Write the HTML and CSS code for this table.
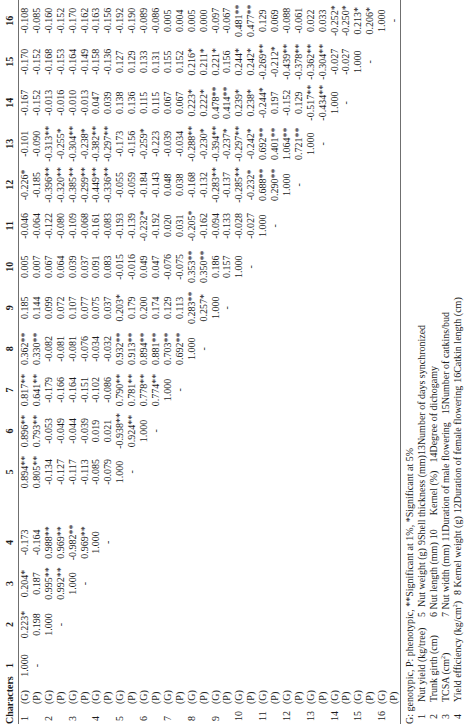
FILE: index.html
```html
<!DOCTYPE html>
<html>
<head>
<meta charset="utf-8">
<title>Correlation table</title>
<link rel="stylesheet" href="styles.css">
</head>
<body>
<div class="frame">
<div class="sheet">
<table class="corr">
<colgroup>
<col class="c-num"><col class="c-gp">
<col class="c-val"><col class="c-val"><col class="c-val"><col class="c-val">
<col class="c-gap">
<col class="c-val"><col class="c-val"><col class="c-val"><col class="c-val"><col class="c-val"><col class="c-val">
<col class="c-val"><col class="c-val"><col class="c-val"><col class="c-val"><col class="c-val"><col class="c-val">
</colgroup>
<thead>
<tr><th colspan="2" class="chars">Characters</th><th>1</th><th>2</th><th>3</th><th>4</th><th></th><th>5</th><th>6</th><th>7</th><th>8</th><th>9</th><th>10</th><th>11</th><th>12</th><th>13</th><th>14</th><th>15</th><th>16</th></tr>
</thead>
<tbody>
<tr><td class="n">1</td><td class="gp">(G)</td><td>1.000</td><td>0.223*</td><td>0.204*</td><td>-0.173</td><td></td><td>0.894**</td><td>0.896**</td><td>0.817**</td><td>0.362**</td><td>0.185</td><td>0.005</td><td>-0.046</td><td>-0.226*</td><td>-0.101</td><td>-0.167</td><td>-0.170</td><td>-0.108</td></tr>
<tr><td class="n"></td><td class="gp">(P)</td><td>-</td><td>0.198</td><td>0.187</td><td>-0.164</td><td></td><td>0.805**</td><td>0.793**</td><td>0.641**</td><td>0.330**</td><td>0.144</td><td>0.007</td><td>-0.064</td><td>-0.185</td><td>-0.090</td><td>-0.152</td><td>-0.152</td><td>-0.085</td></tr>
<tr><td class="n">2</td><td class="gp">(G)</td><td></td><td>1.000</td><td>0.995**</td><td>0.988**</td><td></td><td>-0.134</td><td>-0.053</td><td>-0.179</td><td>-0.082</td><td>0.099</td><td>0.067</td><td>-0.122</td><td>-0.396**</td><td>-0.313**</td><td>-0.013</td><td>-0.168</td><td>-0.160</td></tr>
<tr><td class="n"></td><td class="gp">(P)</td><td></td><td>-</td><td>0.992**</td><td>0.969**</td><td></td><td>-0.127</td><td>-0.049</td><td>-0.166</td><td>-0.081</td><td>0.072</td><td>0.064</td><td>-0.080</td><td>-0.320**</td><td>-0.255*</td><td>-0.016</td><td>-0.153</td><td>-0.152</td></tr>
<tr><td class="n">3</td><td class="gp">(G)</td><td></td><td></td><td>1.000</td><td>-0.982**</td><td></td><td>-0.117</td><td>-0.044</td><td>-0.164</td><td>-0.081</td><td>0.107</td><td>0.039</td><td>-0.109</td><td>-0.385**</td><td>-0.304**</td><td>-0.010</td><td>-0.164</td><td>-0.170</td></tr>
<tr><td class="n"></td><td class="gp">(P)</td><td></td><td></td><td>-</td><td>0.969**</td><td></td><td>-0.113</td><td>-0.039</td><td>-0.151</td><td>-0.076</td><td>0.077</td><td>0.037</td><td>-0.068</td><td>-0.299**</td><td>-0.238*</td><td>-0.013</td><td>-0.149</td><td>-0.162</td></tr>
<tr><td class="n">4</td><td class="gp">(G)</td><td></td><td></td><td></td><td>1.000</td><td></td><td>-0.085</td><td>0.019</td><td>-0.102</td><td>-0.034</td><td>0.075</td><td>0.091</td><td>-0.161</td><td>-0.449**</td><td>-0.382**</td><td>0.047</td><td>-0.158</td><td>-0.163</td></tr>
<tr><td class="n"></td><td class="gp">(P)</td><td></td><td></td><td></td><td>-</td><td></td><td>-0.079</td><td>0.021</td><td>-0.086</td><td>-0.032</td><td>0.037</td><td>0.083</td><td>-0.083</td><td>-0.336**</td><td>-0.297**</td><td>0.039</td><td>-0.136</td><td>-0.156</td></tr>
<tr><td class="n">5</td><td class="gp">(G)</td><td></td><td></td><td></td><td></td><td></td><td>1.000</td><td>-0.938**</td><td>0.790**</td><td>0.932**</td><td>0.203*</td><td>-0.015</td><td>-0.193</td><td>-0.055</td><td>-0.173</td><td>0.138</td><td>0.127</td><td>-0.192</td></tr>
<tr><td class="n"></td><td class="gp">(P)</td><td></td><td></td><td></td><td></td><td></td><td>-</td><td>0.924**</td><td>0.781**</td><td>0.913**</td><td>0.179</td><td>-0.016</td><td>-0.139</td><td>-0.059</td><td>-0.156</td><td>0.136</td><td>0.129</td><td>-0.190</td></tr>
<tr><td class="n">6</td><td class="gp">(G)</td><td></td><td></td><td></td><td></td><td></td><td></td><td>1.000</td><td>0.778**</td><td>0.894**</td><td>0.200</td><td>0.049</td><td>-0.232*</td><td>-0.184</td><td>-0.259*</td><td>0.115</td><td>0.133</td><td>-0.089</td></tr>
<tr><td class="n"></td><td class="gp">(P)</td><td></td><td></td><td></td><td></td><td></td><td></td><td>-</td><td>0.774**</td><td>0.881**</td><td>0.174</td><td>0.047</td><td>-0.192</td><td>-0.143</td><td>-0.223</td><td>0.115</td><td>0.131</td><td>-0.086</td></tr>
<tr><td class="n">7</td><td class="gp">(G)</td><td></td><td></td><td></td><td></td><td></td><td></td><td></td><td>1.000</td><td>0.703**</td><td>0.129</td><td>-0.076</td><td>0.020</td><td>0.048</td><td>-0.039</td><td>0.067</td><td>0.155</td><td>0.005</td></tr>
<tr><td class="n"></td><td class="gp">(P)</td><td></td><td></td><td></td><td></td><td></td><td></td><td></td><td>-</td><td>0.692**</td><td>0.113</td><td>-0.075</td><td>0.031</td><td>0.038</td><td>-0.034</td><td>0.067</td><td>0.152</td><td>0.004</td></tr>
<tr><td class="n">8</td><td class="gp">(G)</td><td></td><td></td><td></td><td></td><td></td><td></td><td></td><td></td><td>1.000</td><td>0.283**</td><td>0.353**</td><td>-0.205*</td><td>-0.168</td><td>-0.288**</td><td>0.223*</td><td>0.216*</td><td>0.005</td></tr>
<tr><td class="n"></td><td class="gp">(P)</td><td></td><td></td><td></td><td></td><td></td><td></td><td></td><td></td><td>-</td><td>0.257*</td><td>0.350**</td><td>-0.162</td><td>-0.132</td><td>-0.230*</td><td>0.222*</td><td>0.211*</td><td>0.000</td></tr>
<tr><td class="n">9</td><td class="gp">(G)</td><td></td><td></td><td></td><td></td><td></td><td></td><td></td><td></td><td></td><td>1.000</td><td>0.186</td><td>-0.094</td><td>-0.283**</td><td>-0.394**</td><td>0.478**</td><td>0.221*</td><td>-0.097</td></tr>
<tr><td class="n"></td><td class="gp">(P)</td><td></td><td></td><td></td><td></td><td></td><td></td><td></td><td></td><td></td><td>-</td><td>0.157</td><td>-0.133</td><td>-0.137</td><td>-0.237*</td><td>0.414**</td><td>0.156</td><td>-0.067</td></tr>
<tr><td class="n">10</td><td class="gp">(G)</td><td></td><td></td><td></td><td></td><td></td><td></td><td></td><td></td><td></td><td></td><td>1.000</td><td>-0.028</td><td>-0.285**</td><td>-0.297**</td><td>0.239*</td><td>0.244*</td><td>0.481**</td></tr>
<tr><td class="n"></td><td class="gp">(P)</td><td></td><td></td><td></td><td></td><td></td><td></td><td></td><td></td><td></td><td></td><td>-</td><td>-0.027</td><td>-0.232*</td><td>-0.242*</td><td>0.238*</td><td>0.242*</td><td>0.477**</td></tr>
<tr><td class="n">11</td><td class="gp">(G)</td><td></td><td></td><td></td><td></td><td></td><td></td><td></td><td></td><td></td><td></td><td></td><td>1.000</td><td>0.688**</td><td>0.692**</td><td>-0.244*</td><td>-0.269**</td><td>0.129</td></tr>
<tr><td class="n"></td><td class="gp">(P)</td><td></td><td></td><td></td><td></td><td></td><td></td><td></td><td></td><td></td><td></td><td></td><td>-</td><td>0.290**</td><td>0.401**</td><td>0.197</td><td>-0.212*</td><td>0.069</td></tr>
<tr><td class="n">12</td><td class="gp">(G)</td><td></td><td></td><td></td><td></td><td></td><td></td><td></td><td></td><td></td><td></td><td></td><td></td><td>1.000</td><td>1.064**</td><td>-0.152</td><td>-0.439**</td><td>-0.088</td></tr>
<tr><td class="n"></td><td class="gp">(P)</td><td></td><td></td><td></td><td></td><td></td><td></td><td></td><td></td><td></td><td></td><td></td><td></td><td>-</td><td>0.721**</td><td>0.129</td><td>-0.378**</td><td>-0.061</td></tr>
<tr><td class="n">13</td><td class="gp">(G)</td><td></td><td></td><td></td><td></td><td></td><td></td><td></td><td></td><td></td><td></td><td></td><td></td><td></td><td>1.000</td><td>-0.517**</td><td>-0.362**</td><td>0.022</td></tr>
<tr><td class="n"></td><td class="gp">(P)</td><td></td><td></td><td></td><td></td><td></td><td></td><td></td><td></td><td></td><td></td><td></td><td></td><td></td><td>-</td><td>-0.434**</td><td>-0.304**</td><td>0.033</td></tr>
<tr><td class="n">14</td><td class="gp">(G)</td><td></td><td></td><td></td><td></td><td></td><td></td><td></td><td></td><td></td><td></td><td></td><td></td><td></td><td></td><td>1.000</td><td>-0.027</td><td>-0.252*</td></tr>
<tr><td class="n"></td><td class="gp">(P)</td><td></td><td></td><td></td><td></td><td></td><td></td><td></td><td></td><td></td><td></td><td></td><td></td><td></td><td></td><td>-</td><td>-0.027</td><td>-0.250*</td></tr>
<tr><td class="n">15</td><td class="gp">(G)</td><td></td><td></td><td></td><td></td><td></td><td></td><td></td><td></td><td></td><td></td><td></td><td></td><td></td><td></td><td></td><td>1.000</td><td>0.213*</td></tr>
<tr><td class="n"></td><td class="gp">(P)</td><td></td><td></td><td></td><td></td><td></td><td></td><td></td><td></td><td></td><td></td><td></td><td></td><td></td><td></td><td></td><td>-</td><td>0.206*</td></tr>
<tr><td class="n">16</td><td class="gp">(G)</td><td></td><td></td><td></td><td></td><td></td><td></td><td></td><td></td><td></td><td></td><td></td><td></td><td></td><td></td><td></td><td></td><td>1.000</td></tr>
<tr class="last"><td class="n"></td><td class="gp">(P)</td><td></td><td></td><td></td><td></td><td></td><td></td><td></td><td></td><td></td><td></td><td></td><td></td><td></td><td></td><td></td><td></td><td>-</td></tr>
</tbody>
</table>
<div class="notes">
<div class="note-head">G: genotypic, P: phenotypic, **Significant at 1%, *Significant at 5%</div>
<div class="note-row"><span class="k">1</span><span class="a">Nut yield (kg/tree)</span><span class="b">5&nbsp; Nut weight (g)</span><span class="c">9Shell thickness (mm)13Number of days synchronized</span></div>
<div class="note-row"><span class="k">2</span><span class="a">Trunk girth (cm)</span><span class="b">6 Nut length (mm)</span><span class="c">10</span><span class="d">Kernel (%)</span><span class="e">14Degree of dichogamy</span></div>
<div class="note-row"><span class="k">3</span><span class="a">TCSA (cm<sup>2</sup>)</span><span class="b">7 Nut width (mm)</span><span class="c">11Duration of male flowering</span><span class="e">15Number of catkins/bud</span></div>
<div class="note-row"><span class="k">4</span><span class="a">Yield efficiency (kg/cm<sup>2</sup>)</span><span class="b wide">8 Kernel weight (g)</span><span class="c">12Duration of female flowering</span><span class="f">16Catkin length (cm)</span></div>
</div>
</div>
</div>
</body>
</html>
```

FILE: styles.css
```css
html, body {
  margin: 0;
  padding: 0;
  background: #ffffff;
}

.frame {
  width: 474px;
  height: 724px;
  overflow: hidden;
}

.sheet {
  width: 724px;
  height: 474px;
  transform-origin: 0 0;
  transform: translateY(724px) rotate(-90deg);
  font-family: "Liberation Serif", "Times New Roman", serif;
  color: #1c1c1c;
}

.corr {
  border-collapse: collapse;
  table-layout: fixed;
  width: 724px;
  font-size: 10px;
}

.corr col.c-num { width: 18px; }
.corr col.c-gp { width: 20px; }
.corr col.c-val { width: 41px; }
.corr col.c-gap { width: 29.5px; }

.corr th {
  height: 18px;
  padding: 0;
  font-weight: bold;
  text-align: center;
  vertical-align: middle;
  border-bottom: 1.5px solid #6f6f6f;
  white-space: nowrap;
}

.corr th.chars {
  text-align: left;
  padding-left: 0;
}

.corr td {
  height: 11.9px;
  padding: 0;
  line-height: 11.9px;
  text-align: center;
  white-space: nowrap;
}

.corr td.n {
  text-align: left;
  padding-left: 3px;
}

.corr td.gp {
  text-align: left;
  padding-left: 2px;
}

.corr tr.last td {
  border-bottom: 1.5px solid #6f6f6f;
}

.notes {
  font-size: 10px;
  line-height: 12px;
  padding-top: 3px;
}

.note-row {
  display: flex;
  white-space: nowrap;
}

.note-row .k {
  width: 22px;
  flex: none;
  padding-left: 5px;
  box-sizing: border-box;
}

.note-row .a {
  min-width: 85px;
  flex: none;
}

.note-row .b {
  min-width: 64px;
  flex: none;
}

.note-row .b.wide {
  margin-left: 6px;
}

.note-row .c {
  margin-left: 3px;
}

.note-row .d {
  margin-left: 14px;
}

.note-row .e {
  margin-left: 8px;
}

.note-row .f {
  margin-left: 3px;
}

sup {
  font-size: 6px;
  line-height: 0;
  vertical-align: 4px;
}
```
